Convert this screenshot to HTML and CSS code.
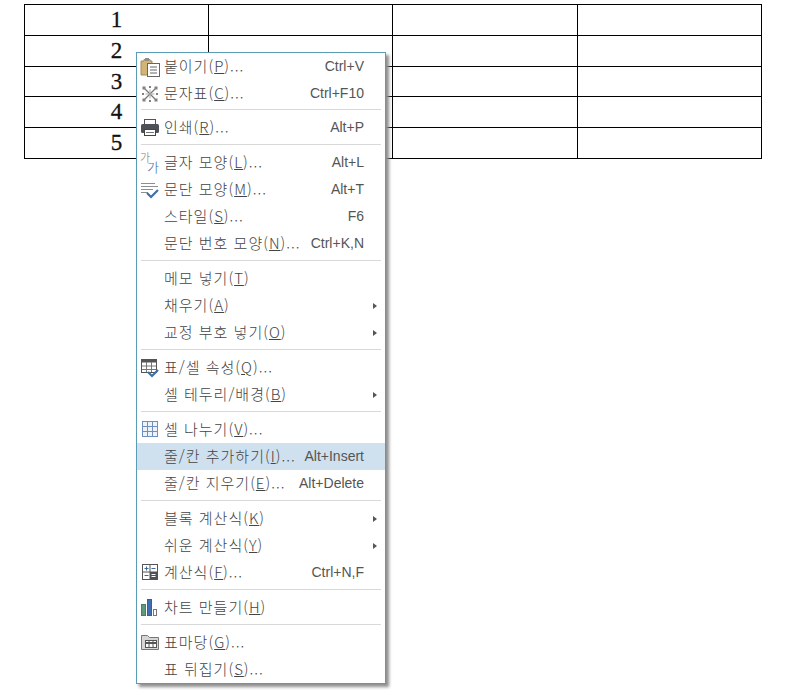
FILE: index.html
```html
<!DOCTYPE html>
<html lang="ko">
<head>
<meta charset="utf-8">
<title>표 메뉴</title>
<link rel="stylesheet" href="styles.css">
</head>
<body>
<table class="sheet">
  <colgroup><col class="c184"><col class="c184"><col class="c185"><col class="c184"></colgroup>
  <tr class="r31"><td>1</td><td></td><td></td><td></td></tr>
  <tr class="r31"><td>2</td><td></td><td></td><td></td></tr>
  <tr class="r30"><td>3</td><td></td><td></td><td></td></tr>
  <tr class="r31"><td>4</td><td></td><td></td><td></td></tr>
  <tr class="r31"><td>5</td><td></td><td></td><td></td></tr>
</table>
<div class="menu">
  <div class="row"><span class="ico"><svg viewBox="0 0 20 20"><path d="M1 4h3V2.500h6V4h2v14H1z" fill="#d3b477" stroke="#a58a55"/><rect x="5" y="1" width="4" height="3" fill="#8b8f8f"/><rect x="7.500" y="6.500" width="12" height="13" fill="#fff" stroke="#666"/><path d="M10 10h7M10 13h7M10 16h7" stroke="#666"/></svg></span><span class="lab">붙이기(<u>P</u>)...</span><span class="key">Ctrl+V</span></div>
  <div class="row"><span class="ico"><svg viewBox="0 0 20 20"><path d="M5 5l10 10M15 5L5 15" stroke="#777" stroke-width="1.300"/><path d="M10 5.500v9M5.500 10h9" stroke="#aaa"/><path d="M2.500 2.500h3v3h-3zM14.500 2.500h3v3h-3zM2.500 14.500h3v3h-3zM14.500 14.500h3v3h-3zM9 2h2v2H9zM9 16h2v2H9zM2 9h2v2H2zM16 9h2v2h-2z" fill="#808080"/></svg></span><span class="lab">문자표(<u>C</u>)...</span><span class="key">Ctrl+F10</span></div>
  <div class="sep first"></div>
  <div class="row"><span class="ico"><svg viewBox="0 0 20 20"><rect x="4.500" y="1.500" width="11" height="6" fill="#fff" stroke="#555"/><rect x="1" y="6" width="18" height="9" rx="1.500" fill="#4e5258"/><rect x="4.500" y="11.500" width="11" height="6" fill="#fff" stroke="#444"/><path d="M6 14.500h8" stroke="#777"/></svg></span><span class="lab">인쇄(<u>R</u>)...</span><span class="key">Alt+P</span></div>
  <div class="sep"></div>
  <div class="row"><span class="ico"><svg viewBox="0 0 20 20"><text x="0" y="9" class="g1">가</text><text x="7" y="19" class="g2">가</text></svg></span><span class="lab">글자 모양(<u>L</u>)...</span><span class="key">Alt+L</span></div>
  <div class="row"><span class="ico"><svg viewBox="0 0 20 20"><path d="M1 3.500h14M1 6.500h17M1 9.500h12M1 12.500h7" stroke="#8a8f96"/><path d="M7 13l4 4 7-7" fill="none" stroke="#3d70a8" stroke-width="2.200"/></svg></span><span class="lab">문단 모양(<u>M</u>)...</span><span class="key">Alt+T</span></div>
  <div class="row"><span class="ico"></span><span class="lab">스타일(<u>S</u>)...</span><span class="key">F6</span></div>
  <div class="row"><span class="ico"></span><span class="lab">문단 번호 모양(<u>N</u>)...</span><span class="key">Ctrl+K,N</span></div>
  <div class="sep"></div>
  <div class="row"><span class="ico"></span><span class="lab">메모 넣기(<u>T</u>)</span></div>
  <div class="row"><span class="ico"></span><span class="lab">채우기(<u>A</u>)</span><span class="arrow"></span></div>
  <div class="row"><span class="ico"></span><span class="lab">교정 부호 넣기(<u>O</u>)</span><span class="arrow"></span></div>
  <div class="sep"></div>
  <div class="row"><span class="ico"><svg viewBox="0 0 20 20"><rect x="1.500" y="1.500" width="15" height="13" fill="#fff" stroke="#555"/><rect x="1" y="1" width="16" height="3.500" fill="#555"/><path d="M6.500 4v10M11.500 4v10M2 8h14M2 11.500h14" stroke="#777"/><path d="M8 14l4 4 6-6" fill="none" stroke="#3d70a8" stroke-width="2.200"/></svg></span><span class="lab">표/셀 속성(<u>Q</u>)...</span></div>
  <div class="row"><span class="ico"></span><span class="lab">셀 테두리/배경(<u>B</u>)</span><span class="arrow"></span></div>
  <div class="sep"></div>
  <div class="row"><span class="ico"><svg viewBox="0 0 20 20"><rect x="2.500" y="1.500" width="15" height="15" fill="#eef3fa" stroke="#6f8fc0"/><path d="M7.500 2v14M12.500 2v14M3 6.500h14M3 11.500h14" stroke="#6f8fc0"/></svg></span><span class="lab">셀 나누기(<u>V</u>)...</span></div>
  <div class="row hot"><span class="ico"></span><span class="lab">줄/칸 추가하기(<u>I</u>)...</span><span class="key">Alt+Insert</span></div>
  <div class="row"><span class="ico"></span><span class="lab">줄/칸 지우기(<u>E</u>)...</span><span class="key">Alt+Delete</span></div>
  <div class="sep"></div>
  <div class="row"><span class="ico"></span><span class="lab">블록 계산식(<u>K</u>)</span><span class="arrow"></span></div>
  <div class="row"><span class="ico"></span><span class="lab">쉬운 계산식(<u>Y</u>)</span><span class="arrow"></span></div>
  <div class="row"><span class="ico"><svg viewBox="0 0 20 20"><rect x="2.500" y="1.500" width="15" height="15" fill="#fff" stroke="#555"/><path d="M10 2v14M3 9h14" stroke="#555"/><rect x="10" y="9" width="7" height="7" fill="#4e5258"/><path d="M4.500 5.500h4M6.500 3.500v4M11.500 5.500h4M4.500 12.500h4" stroke="#3e6a9e"/><path d="M11.500 11.500h4M11.500 13.500h4" stroke="#fff"/></svg></span><span class="lab">계산식(<u>F</u>)...</span><span class="key">Ctrl+N,F</span></div>
  <div class="sep"></div>
  <div class="row"><span class="ico"><svg viewBox="0 0 20 20"><rect x="1.500" y="6.500" width="4" height="11" fill="#5f9a7c" stroke="#4a7d63"/><rect x="7.500" y="1.500" width="4" height="16" fill="#3f6fb0" stroke="#34609c"/><rect x="13.500" y="11.500" width="3" height="6" fill="#fff" stroke="#777"/></svg></span><span class="lab">차트 만들기(<u>H</u>)</span></div>
  <div class="sep"></div>
  <div class="row"><span class="ico"><svg viewBox="0 0 20 20"><path d="M1.500 2.500h6l2 2h9v12h-17z" fill="#d6d6d6" stroke="#777"/><rect x="5.500" y="7.500" width="11" height="7" fill="#fff" stroke="#555"/><path d="M6 10h10" stroke="#555" stroke-width="2"/><path d="M9 8v6M13 8v6" stroke="#555"/></svg></span><span class="lab">표마당(<u>G</u>)...</span></div>
  <div class="row"><span class="ico"></span><span class="lab">표 뒤집기(<u>S</u>)...</span></div>
</div>
</body>
</html>
```
FILE: styles.css
```css
html, body {
  margin: 0;
  padding: 0;
  height: 694px;
  overflow: hidden;
  background: #fff;
}
body {
  padding-top: 4px;
  padding-left: 24px;
  box-sizing: border-box;
}
.sheet {
  border-collapse: collapse;
  table-layout: fixed;
  width: 737px;
  font-family: "Liberation Serif", serif;
  font-size: 23px;
  color: #111;
  -webkit-text-stroke: 0.3px #111;
}
.c184 { width: 184px; }
.c185 { width: 185px; }
.sheet td {
  border: 1px solid #000;
  padding: 0;
  text-align: center;
  vertical-align: middle;
  line-height: 26px;
}
.r31 { height: 31px; }
.r30 { height: 30px; }
.menu {
  position: absolute;
  left: 136px;
  top: 52px;
  width: 248px;
  height: 630px;
  border: 1px solid #5a9cb8;
  background: #fff;
  box-shadow: 3px 3px 3px #8f8f8f;
  font-family: "Noto Sans CJK KR", "Noto Sans", sans-serif;
  font-size: 15px;
  font-weight: 300;
  color: #444;
}
.row {
  display: flex;
  align-items: center;
  height: 27px;
  padding-left: 3px;
}
.ico {
  width: 24px;
  height: 20px;
  flex: none;
}
.ico svg {
  display: block;
  width: 20px;
  height: 20px;
  overflow: visible;
}
.lab {
  flex: 1;
  white-space: nowrap;
  letter-spacing: 1px;
  line-height: 20px;
  padding-bottom: 1px;
}
.key {
  font-family: "Liberation Sans", sans-serif;
  font-size: 14px;
  color: #555;
  margin-right: 21px;
  padding-bottom: 1px;
  white-space: nowrap;
}
.arrow {
  width: 0;
  height: 0;
  border-left: 4px solid #555;
  border-top: 3px solid transparent;
  border-bottom: 3px solid transparent;
  margin-right: 8px;
}
.sep {
  height: 1px;
  background: #d9d9d9;
  margin: 3px 4px 4px;
}
.sep.first { margin-top: 2px; }
.hot { background: #cfe0ef; }
.g1 { font-size: 11px; fill: #777; font-family: "Noto Sans CJK KR", sans-serif; }
.g2 { font-size: 13px; fill: #3d70a8; font-family: "Noto Sans CJK KR", sans-serif; }
```
